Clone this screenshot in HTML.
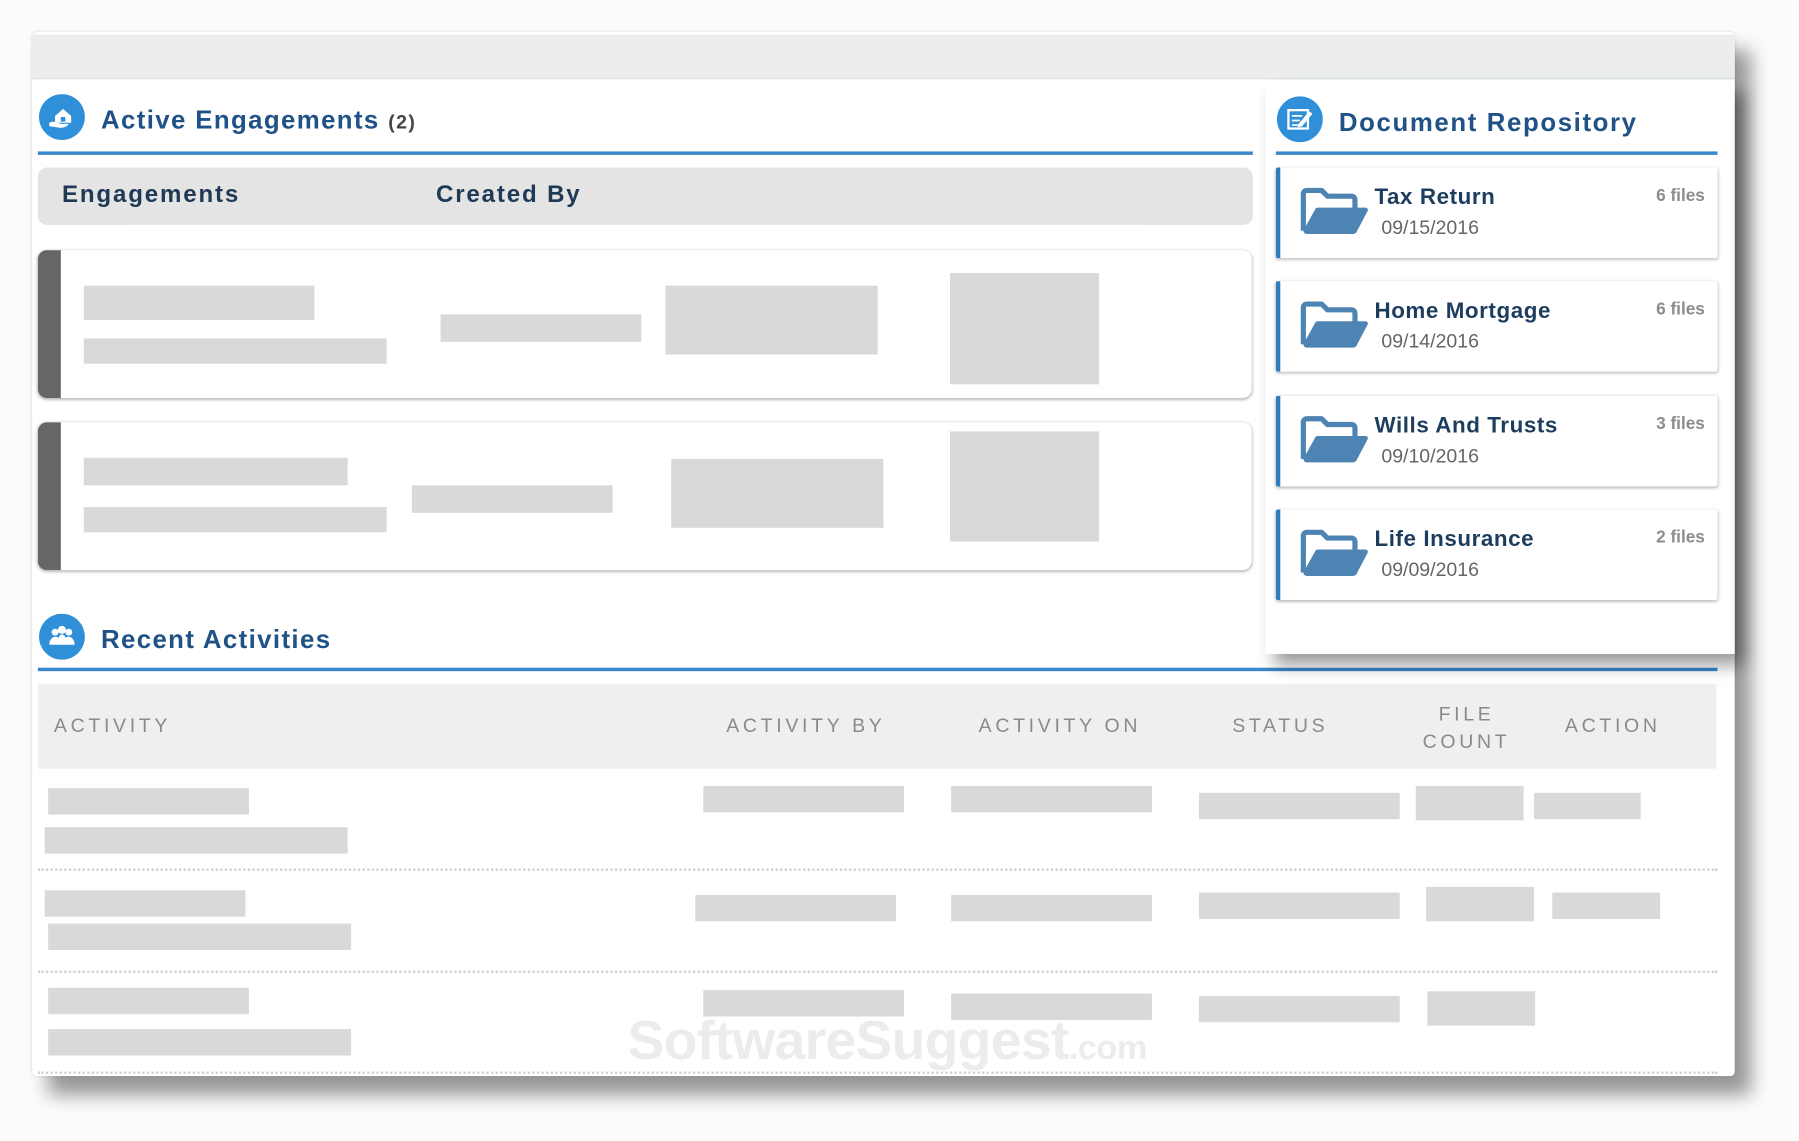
<!DOCTYPE html>
<html><head><meta charset="utf-8"><style>
html,body{margin:0;padding:0;background:#fbfbfb;width:1799px;height:1141px;overflow:hidden;font-family:"Liberation Sans",sans-serif}
#s{position:absolute;left:0;top:0;width:1568px;height:994px;transform:scale(1.1473);transform-origin:0 0}
.a{position:absolute}
.r{position:absolute;background:#d9d9d9}
.h{font-weight:bold;color:#1f5286;font-size:22.5px;letter-spacing:1.2px}
.th{position:absolute;color:#8a8a8a;font-size:17px;letter-spacing:3.2px}
.card{position:absolute;left:33px;width:1058px;height:129px;background:#fff;border-radius:8px;box-shadow:0 1px 3px rgba(0,0,0,.35);overflow:hidden}
.card:before{content:"";position:absolute;left:0;top:0;bottom:0;width:20px;background:#666}
.dc{position:absolute;left:1112px;width:381px;height:79px;background:#fff;border-left:4px solid #2e7bc0;box-shadow:0 1px 3px rgba(0,0,0,.3);border-radius:2px}
.dc .t{position:absolute;left:82px;top:15px;font-size:19.5px;font-weight:bold;color:#1d3d5e;letter-spacing:.5px}
.dc .d{position:absolute;left:88px;top:43px;font-size:17px;color:#666}
.dc .f{position:absolute;right:11px;top:16px;font-size:15px;color:#8c8c8c;font-weight:bold}
.dc svg{position:absolute;left:16px;top:15px}
.dot{position:absolute;left:33px;width:1464px;border-top:2px dotted #cfcfcf}
</style></head><body><div id="s">
<div class="a" style="left:28px;top:28px;width:1484px;height:910px;background:#fff;box-shadow:14px 16px 16px rgba(0,0,0,.4),0 0 3px rgba(0,0,0,.15);border-radius:4px"></div>
<div class="a" style="left:28px;top:30px;width:1484px;height:38px;background:#eceeee;border-bottom:1px solid #dfe2e2"></div>

<svg class="a" style="left:34px;top:82px" width="40" height="40" viewBox="0 0 40 40"><circle cx="20" cy="20" r="20" fill="#2f8fd8"/><path d="M14 19l7-6 7 6v6h-14z" fill="#fff"/><rect x="19" y="20" width="4" height="4" fill="#2f8fd8"/><path d="M9 25c4-2 7 0 10 1h7c-2 3-6 4-10 3l-7-1z" fill="#fff"/></svg>
<div class="a h" style="left:88px;top:92px">Active Engagements <span style="font-size:17px;color:#444">(2)</span></div>
<div class="a" style="left:33px;top:132px;width:1059px;height:3px;background:#3a87c9"></div>
<div class="a" style="left:33px;top:146px;width:1059px;height:50px;background:#e4e4e4;border-radius:8px"></div>
<div class="a" style="left:54px;top:158px;font-size:21px;font-weight:bold;color:#203a55;letter-spacing:1.6px">Engagements</div>
<div class="a" style="left:380px;top:158px;font-size:21px;font-weight:bold;color:#203a55;letter-spacing:1.6px">Created By</div>

<div class="card" style="top:218px"></div>
<div class="r" style="left:73px;top:249px;width:201px;height:30px"></div>
<div class="r" style="left:73px;top:295px;width:264px;height:22px"></div>
<div class="r" style="left:384px;top:274px;width:175px;height:24px"></div>
<div class="r" style="left:580px;top:249px;width:185px;height:60px"></div>
<div class="r" style="left:828px;top:238px;width:130px;height:97px"></div>

<div class="card" style="top:368px"></div>
<div class="r" style="left:73px;top:399px;width:230px;height:24px"></div>
<div class="r" style="left:73px;top:442px;width:264px;height:22px"></div>
<div class="r" style="left:359px;top:423px;width:175px;height:24px"></div>
<div class="r" style="left:585px;top:400px;width:185px;height:60px"></div>
<div class="r" style="left:828px;top:376px;width:130px;height:96px"></div>

<svg class="a" style="left:34px;top:535px" width="40" height="40" viewBox="0 0 40 40"><circle cx="20" cy="20" r="20" fill="#2f8fd8"/><circle cx="14" cy="16" r="3" fill="#fff"/><circle cx="26" cy="16" r="3" fill="#fff"/><circle cx="20" cy="14" r="3.5" fill="#fff"/><path d="M9 27c0-5 3-7 5-7s3 1 3 1 1-3 3-3 3 2 3 3c0 0 1-1 3-1s5 2 5 7z" fill="#fff"/></svg>
<div class="a h" style="left:88px;top:545px">Recent Activities</div>
<div class="a" style="left:33px;top:582px;width:1464px;height:3px;background:#3a87c9"></div>
<div class="a" style="left:33px;top:596px;width:1463px;height:74px;background:#efefef"></div>
<div class="th" style="left:47px;top:623px">ACTIVITY</div>
<div class="th" style="left:633px;top:623px">ACTIVITY BY</div>
<div class="th" style="left:853px;top:623px">ACTIVITY ON</div>
<div class="th" style="left:1074px;top:623px">STATUS</div>
<div class="th" style="left:1240px;top:611px;text-align:center;line-height:24px">FILE<br>COUNT</div>
<div class="th" style="left:1364px;top:623px">ACTION</div>

<div class="r" style="left:42px;top:687px;width:175px;height:23px"></div>
<div class="r" style="left:39px;top:721px;width:264px;height:23px"></div>
<div class="r" style="left:613px;top:685px;width:175px;height:23px"></div>
<div class="r" style="left:829px;top:685px;width:175px;height:23px"></div>
<div class="r" style="left:1045px;top:691px;width:175px;height:23px"></div>
<div class="r" style="left:1234px;top:685px;width:94px;height:30px"></div>
<div class="r" style="left:1337px;top:691px;width:93px;height:23px"></div>
<div class="dot" style="top:757px"></div>
<div class="r" style="left:39px;top:776px;width:175px;height:23px"></div>
<div class="r" style="left:42px;top:805px;width:264px;height:23px"></div>
<div class="r" style="left:606px;top:780px;width:175px;height:23px"></div>
<div class="r" style="left:829px;top:780px;width:175px;height:23px"></div>
<div class="r" style="left:1045px;top:778px;width:175px;height:23px"></div>
<div class="r" style="left:1243px;top:773px;width:94px;height:30px"></div>
<div class="r" style="left:1353px;top:778px;width:94px;height:23px"></div>
<div class="dot" style="top:846px"></div>
<div class="r" style="left:42px;top:861px;width:175px;height:23px"></div>
<div class="r" style="left:42px;top:897px;width:264px;height:23px"></div>
<div class="r" style="left:613px;top:863px;width:175px;height:23px"></div>
<div class="r" style="left:829px;top:866px;width:175px;height:23px"></div>
<div class="r" style="left:1045px;top:868px;width:175px;height:23px"></div>
<div class="r" style="left:1244px;top:864px;width:94px;height:30px"></div>
<div class="dot" style="top:934px"></div>
<div class="a" style="left:547px;top:880px;font-size:48px;font-weight:bold;color:#ececec;letter-spacing:-.5px">SoftwareSuggest<span style="font-size:30px">.com</span></div>

<div class="a" style="left:1103px;top:70px;width:409px;height:500px;background:#fff;box-shadow:8px 10px 14px rgba(0,0,0,.4)"></div>
<svg class="a" style="left:1113px;top:84px" width="40" height="40" viewBox="0 0 40 40"><circle cx="20" cy="20" r="20" fill="#2f8fd8"/><rect x="10" y="12" width="17" height="16" fill="none" stroke="#fff" stroke-width="2"/><path d="M13 17h9M13 21h7M13 25h6" stroke="#fff" stroke-width="1.5"/><path d="M19 24l9-11 3 2-9 11-4 1z" fill="#fff"/></svg>
<div class="a h" style="left:1167px;top:94px;letter-spacing:1.4px">Document Repository</div>
<div class="a" style="left:1112px;top:132px;width:385px;height:3px;background:#3a87c9"></div>

<svg width="0" height="0" style="position:absolute"><defs><g id="fd"><path d="M4 40V8a3 3 0 0 1 3-3h13l5 5h21a3 3 0 0 1 3 3v8" fill="none" stroke="#4d84b3" stroke-width="4.5" stroke-linejoin="round"/><path d="M4 40l10-18a3 3 0 0 1 3-2h41a2 2 0 0 1 2 3l-9 17a4 4 0 0 1-4 3H7a3 3 0 0 1-3-3z" fill="#4d84b3"/></g></defs></svg>
<div class="dc" style="top:146px"><svg width="62" height="46" viewBox="0 0 62 46"><use href="#fd"/></svg><div class="t">Tax Return</div><div class="d">09/15/2016</div><div class="f">6 files</div></div>
<div class="dc" style="top:245px"><svg width="62" height="46" viewBox="0 0 62 46"><use href="#fd"/></svg><div class="t">Home Mortgage</div><div class="d">09/14/2016</div><div class="f">6 files</div></div>
<div class="dc" style="top:345px"><svg width="62" height="46" viewBox="0 0 62 46"><use href="#fd"/></svg><div class="t">Wills And Trusts</div><div class="d">09/10/2016</div><div class="f">3 files</div></div>
<div class="dc" style="top:444px"><svg width="62" height="46" viewBox="0 0 62 46"><use href="#fd"/></svg><div class="t">Life Insurance</div><div class="d">09/09/2016</div><div class="f">2 files</div></div>
</div></body></html>
